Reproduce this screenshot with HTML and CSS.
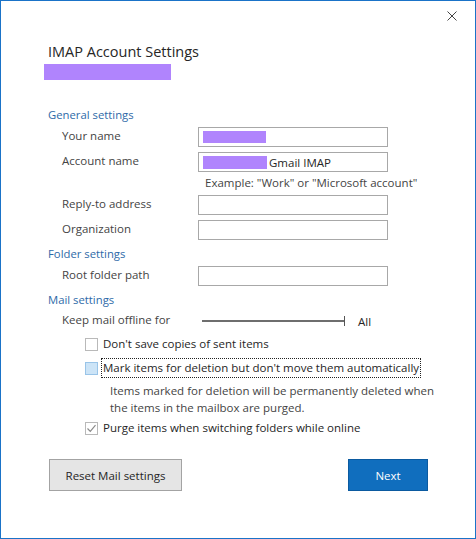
FILE: index.html
```html
<!DOCTYPE html>
<html>
<head>
<meta charset="utf-8">
<link rel="stylesheet" href="styles.css">
</head>
<body>
<div class="window">
  <div class="topbar">
    <button class="close" aria-label="Close">
      <svg width="10" height="10" viewBox="0 0 10 10"><path d="M0.5 0.5 L9.5 9.5 M9.5 0.5 L0.5 9.5" stroke="#444" stroke-width="1" fill="none"/></svg>
    </button>
  </div>
  <div class="content">
    <h1 class="title">IMAP Account Settings</h1>
    <div class="redact redact-title"></div>

    <div class="section">General settings</div>
    <div class="row first">
      <span class="label">Your name</span>
      <div class="input"><span class="redact redact-name"></span></div>
    </div>
    <div class="row">
      <span class="label">Account name</span>
      <div class="input"><span class="redact redact-acct"></span><span class="value">Gmail IMAP</span></div>
    </div>
    <div class="hint">Example: "Work" or "Microsoft account"</div>
    <div class="row tight">
      <span class="label">Reply-to address</span>
      <div class="input"></div>
    </div>
    <div class="row">
      <span class="label">Organization</span>
      <div class="input"></div>
    </div>

    <div class="section">Folder settings</div>
    <div class="row first">
      <span class="label">Root folder path</span>
      <div class="input"></div>
    </div>

    <div class="section">Mail settings</div>
    <div class="row slider-row">
      <span class="label">Keep mail offline for</span>
      <div class="slider-wrap">
        <div class="slider"><span class="track"></span><span class="tick"></span></div>
        <span class="slider-value">All</span>
      </div>
    </div>

    <label class="check cb1"><span class="box"></span><span class="check-text">Don't save copies of sent items</span></label>
    <label class="check cb2"><span class="box hover"></span><span class="check-text focus">Mark items for deletion but don't move them automatically</span></label>
    <div class="desc">Items marked for deletion will be permanently deleted when the items in the mailbox are purged.</div>
    <label class="check cb3"><span class="box checked"><svg width="11" height="11" viewBox="0 0 11 11"><path d="M1.5 5.5 L4.3 8.3 L9.5 2.2" stroke="#8a8a8a" stroke-width="1.2" fill="none"/></svg></span><span class="check-text">Purge items when switching folders while online</span></label>

    <div class="buttons">
      <button class="btn btn-secondary">Reset Mail settings</button>
      <button class="btn btn-primary">Next</button>
    </div>
  </div>
</div>
</body>
</html>
```
FILE: styles.css
```css
html, body {
  margin: 0;
  padding: 0;
  background: #ffffff;
}
.window {
  width: 476px;
  height: 539px;
  box-sizing: border-box;
  border: 1px solid #1a73c8;
  background: #ffffff;
  font-family: "Open Sans", "Noto Sans", sans-serif;
  font-size: 11.5px;
  color: #444444;
}
.topbar {
  height: 29px;
  display: flex;
  justify-content: flex-end;
  align-items: flex-start;
  padding: 10px 18px 0 0;
  box-sizing: border-box;
}
.close {
  width: 10px;
  height: 10px;
  padding: 0;
  border: 0;
  background: transparent;
  display: flex;
}
.content {
  padding: 0 47px;
}
.title {
  margin: 12px 0 0 0;
  font-size: 14.5px;
  font-weight: 400;
  line-height: 20px;
  color: #262626;
}
.redact {
  display: block;
  background: #b084fd;
}
.redact-title {
  width: 127px;
  height: 16px;
  margin: 2px 0 0 -4px;
}
.section {
  color: #2e6aa8;
  font-size: 11.3px;
  line-height: 16px;
  margin-top: 6px;
}
.redact-title + .section {
  margin-top: 27px;
}
.row {
  display: grid;
  grid-template-columns: 136px 190px;
  padding-left: 14px;
  align-items: center;
  height: 20px;
  margin-top: 5px;
}
.row.first {
  margin-top: 4px;
}
.row.tight {
  margin-top: 4px;
}
.label {
  line-height: 16px;
  margin-top: -2px;
}
.input {
  height: 20px;
  box-sizing: border-box;
  border: 1px solid #a8a8a8;
  display: flex;
  align-items: center;
  padding-left: 4px;
}
.redact-name {
  width: 63px;
  height: 12px;
}
.redact-acct {
  width: 64px;
  height: 13px;
}
.value {
  margin-left: 2px;
  color: #262626;
}
.hint {
  margin: 3px 0 0 157px;
  line-height: 16px;
  color: #444;
}
.slider-row {
  margin-top: 3px;
}
.slider-wrap {
  display: flex;
  align-items: center;
  padding-left: 4px;
}
.slider {
  position: relative;
  width: 143px;
  height: 10px;
  display: flex;
  align-items: center;
}
.track {
  display: block;
  width: 143px;
  height: 2px;
  background: #6e6e6e;
}
.tick {
  position: absolute;
  right: 0;
  top: 0;
  width: 1px;
  height: 10px;
  background: #555;
}
.slider-value {
  margin-left: 13px;
  color: #262626;
}
.check {
  display: flex;
  align-items: center;
  margin-left: 37px;
  line-height: 16px;
  color: #262626;
}
.cb1 { margin-top: 5px; }
.cb2 { margin-top: 6px; height: 20px; }
.cb3 { margin-top: 4px; }
.box {
  width: 13px;
  height: 13px;
  box-sizing: border-box;
  border: 1px solid #b9b9b9;
  background: #fff;
  flex: none;
  margin-right: 5px;
  display: flex;
  align-items: center;
  justify-content: center;
}
.box.hover {
  background: #cce4f7;
  border-color: #99c4e8;
}
.box svg { display: block; }
.check-text.focus {
  outline: 1px dotted #222;
  outline-offset: 0;
  padding: 0 1px;
  margin-left: -1px;
  line-height: 18px;
}
.desc {
  margin: 4px 0 0 62px;
  line-height: 17px;
  width: 333px;
  color: #444;
}
.buttons {
  display: flex;
  justify-content: space-between;
  margin-top: 23px;
  padding-left: 1px;
}
.btn {
  height: 32px;
  font-family: "Open Sans", "Noto Sans", sans-serif;
  font-size: 11.5px;
  box-sizing: border-box;
  padding: 0;
}
.btn-secondary {
  width: 133px;
  background: #e5e5e5;
  border: 1px solid #a3a3a3;
  color: #262626;
}
.btn-primary {
  width: 80px;
  background: #106ebe;
  border: 1px solid #0b5aa0;
  color: #ffffff;
}
```
